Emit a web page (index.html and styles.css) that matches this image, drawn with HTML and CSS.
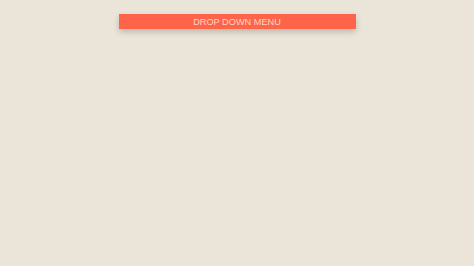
FILE: index.html
```html
<!DOCTYPE html>
<html lang="en">
<head>
  <meta charset="UTF-8" />
  <title>Drop Down Menu</title>
  <link rel="stylesheet" href="styles.css">
</head>
<body>

  <nav class="menu">
    <div class="menu-title">DROP DOWN MENU</div>
  </nav>

</body>
</html>
```

FILE: styles.css
```css
body {
  font-family: 'Liberation Sans', Arial, sans-serif;
  margin: 0;
  background: #ebe5d9;
  height: 266px;
}
.menu {
  width: 50%;
  margin: 14px auto 0;
}
.menu-title {
  background: #fe6449;
  color: #fdd6c2;
  font-size: 9.2px;
  height: 15px;
  line-height: 17px;
  overflow: hidden;
  text-align: center;
  box-shadow: 0 3px 6px rgba(0,0,0,0.2);
}
```
